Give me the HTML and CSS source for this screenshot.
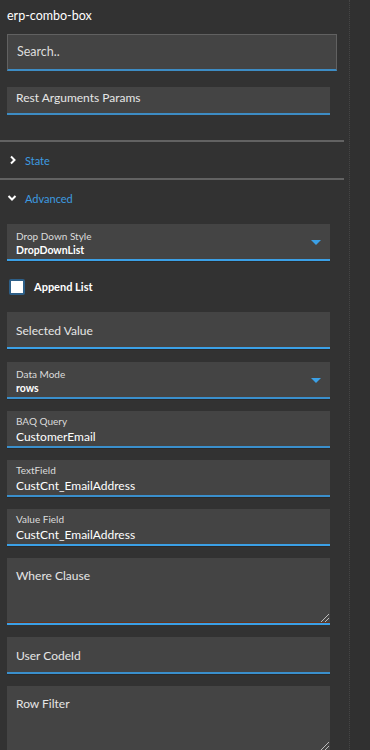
FILE: index.html
```html
<!DOCTYPE html>
<html>
<head>
<meta charset="utf-8">
<link rel="stylesheet" href="styles.css">
</head>
<body>
<div class="page">
  <div class="panel">
    <div class="title">erp-combo-box</div>
    <div class="search">Search..</div>
    <div class="field short">Rest Arguments Params</div>
    <div class="sep"></div>
    <div class="section">
      <svg class="chev" width="8" height="10" viewBox="0 0 8 10"><path d="M2 1.5 L5.5 5 L2 8.5" fill="none" stroke="#fff" stroke-width="2"/></svg>
      <span>State</span>
    </div>
    <div class="sep"></div>
    <div class="section">
      <svg class="chev down" width="10" height="8" viewBox="0 0 10 8"><path d="M1.5 2 L5 5.5 L8.5 2" fill="none" stroke="#fff" stroke-width="2"/></svg>
      <span>Advanced</span>
    </div>
    <div class="box select first">
      <div class="lbl">Drop Down Style</div>
      <div class="val">DropDownList</div>
      <span class="arrow"></span>
    </div>
    <div class="check"><span class="cb"></span><span>Append List</span></div>
    <div class="box plain">Selected Value</div>
    <div class="box select dark">
      <div class="lbl">Data Mode</div>
      <div class="val">rows</div>
      <span class="arrow"></span>
    </div>
    <div class="box filled dark">
      <div class="lbl">BAQ Query</div>
      <div class="big">CustomerEmail</div>
    </div>
    <div class="box filled dark">
      <div class="lbl">TextField</div>
      <div class="big">CustCnt_EmailAddress</div>
    </div>
    <div class="box filled">
      <div class="lbl">Value Field</div>
      <div class="big">CustCnt_EmailAddress</div>
    </div>
    <div class="box area warn">Where Clause<span class="grip"></span></div>
    <div class="box plain dark">User CodeId</div>
    <div class="box area">Row Filter<span class="grip"></span></div>
  </div>
  <div class="rail"></div>
</div>
</body>
</html>
```
FILE: styles.css
```css
html, body {
  margin: 0;
  padding: 0;
  background: #323232;
  height: 750px;
  overflow: hidden;
}
body {
  font-family: Lato, "Noto Sans", sans-serif;
  color: #e6e6e6;
}
.page {
  display: flex;
  height: 750px;
}
.panel {
  width: 350px;
  flex: none;
  border-right: 1px dotted #454545;
  box-sizing: border-box;
}
.rail {
  flex: 1;
  background: #303030;
}
.title {
  padding: 8px 0 0 7px;
  height: 34px;
  box-sizing: border-box;
  font-size: 12.5px;
  color: #fff;
  line-height: 16px;
}
.search {
  margin-left: 7px;
  width: 330px;
  height: 37px;
  box-sizing: border-box;
  background: #444;
  border: 1px solid #616161;
  border-bottom: 2px solid #3d8cc4;
  padding-left: 9px;
  font-size: 12.5px;
  line-height: 34px;
  color: #ddd;
}
.field.short {
  margin: 16px 0 0 7px;
  width: 323px;
  height: 28px;
  box-sizing: border-box;
  background: #444;
  border-bottom: 2px solid #3d8cc4;
  padding-left: 9px;
  font-size: 12px;
  line-height: 22px;
}
.sep {
  width: 344px;
  height: 2px;
  background: #626262;
  margin-top: 25px;
}
.section + .sep {
  margin-top: 0;
}
.section {
  height: 36px;
  display: flex;
  align-items: center;
  font-size: 11px;
  color: #3d9be0;
}
.chev {
  width: 12px;
  margin-left: 7px;
  margin-right: 6px;
  display: block;
}
.chev.down {
  width: 10px;
  margin-right: 8px;
}
.box {
  position: relative;
  margin: 12px 0 0 7px;
  width: 323px;
  height: 37px;
  box-sizing: border-box;
  background: #444;
  border-bottom: 2px solid #3ba0e6;
  padding-left: 9px;
  box-shadow: 0 1px 0 #2a2a2a;
}
.box.dark {
  border-bottom-color: #3a8fcc;
}
.select {
  margin-top: 13px;
  padding-top: 6px;
}
.select.first {
  margin-top: 8px;
}
.lbl {
  font-size: 10px;
  line-height: 13px;
  color: #dcdcdc;
}
.val {
  font-size: 10.5px;
  line-height: 15px;
  color: #fff;
  font-weight: bold;
}
.big {
  font-size: 12px;
  line-height: 17px;
  color: #fff;
}
.filled {
  padding-top: 4px;
}
.arrow {
  position: absolute;
  right: 9px;
  top: 16px;
  width: 0;
  height: 0;
  border-left: 5px solid transparent;
  border-right: 5px solid transparent;
  border-top: 5px solid #3ba0e6;
}
.check {
  height: 51px;
  display: flex;
  align-items: center;
  font-size: 11px;
  font-weight: bold;
  color: #fff;
}
.cb {
  width: 12px;
  height: 12px;
  background: #fff;
  border: 2px solid #2d5f88;
  border-radius: 2px;
  margin: 0 9px 0 9px;
}
.check + .box {
  margin-top: 0;
}
.plain {
  font-size: 12px;
  line-height: 37px;
}
.box.area {
  height: 67px;
  padding-top: 9px;
  font-size: 12px;
  line-height: 18px;
}
.box.warn {
  box-shadow: inset 0 -1px 0 #6a3218;
}
.grip {
  position: absolute;
  right: 1px;
  bottom: 1px;
  width: 8px;
  height: 8px;
  background: linear-gradient(135deg, transparent 0 45%, #bbb 45% 55%, transparent 55% 70%, #bbb 70% 80%, transparent 80%);
}
```
